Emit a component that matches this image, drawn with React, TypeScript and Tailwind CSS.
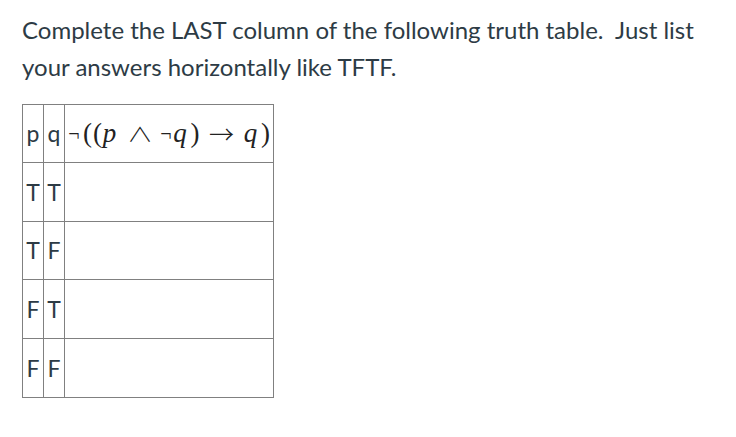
import { Fragment } from "react";

const rows = [
  ["T", "T"],
  ["T", "F"],
  ["F", "T"],
  ["F", "F"],
];

const cell = "border-l border-t border-[#808080] flex items-center justify-center";
const serif = { fontFamily: '"Liberation Serif", "DejaVu Serif", serif' };
const thin = { fontFamily: '"Noto Sans CJK JP", "DejaVu Serif", sans-serif', fontWeight: 300 };

function Formula() {
  // each glyph sits in a fixed box so the spacing follows the typeset math
  return (
    <span className="flex items-center whitespace-nowrap leading-none text-[#222]" style={serif}>
      <span className="inline-block w-[16px] text-center text-[20px]">¬</span>
      <span className="inline-block w-[11px] text-center text-[27px]">(</span>
      <span className="inline-block w-[6px] text-center text-[27px]">(</span>
      <span className="inline-block w-[21px] text-center text-[27px] italic">p</span>
      <span className="inline-block w-[39px] text-center text-[20px]" style={thin}>
        <span className="inline-block scale-x-[1.3]">∧</span>
      </span>
      <span className="inline-block w-[14px] text-center text-[20px]">¬</span>
      <span className="inline-block w-[14px] text-center text-[27px] italic">q</span>
      <span className="inline-block w-[16px] text-center text-[27px]">)</span>
      <span className="inline-block w-[37px] text-center text-[25px]" style={thin}>→</span>
      <span className="inline-block w-[21px] text-center text-[27px] italic">q</span>
      <span className="inline-block w-[7px] text-center text-[27px]">)</span>
    </span>
  );
}

export default function App() {
  return (
    <div className="min-h-screen bg-white pl-[22px] pt-[11px] text-[#2d3b45]" style={{ fontFamily: 'Lato, "Liberation Sans", sans-serif' }}>
      <p className="w-[700px] text-[24px] leading-[37px]">
        Complete the LAST column of the following truth table.&nbsp; Just list your answers horizontally like TFTF.
      </p>

      <div className="mt-[19px] grid w-[252px] grid-cols-[21px_21px_209px] grid-rows-[58px_59px_58px_59px_59px] border-b border-r border-[#808080] text-[23px]">
        <div className={cell}>p</div>
        <div className={cell}>q</div>
        <div className="flex items-center border-l border-t border-[#808080] pl-[1px]">
          <Formula />
        </div>
        {rows.map(([p, q], i) => (
          <Fragment key={i}>
            <div className={cell}>{p}</div>
            <div className={cell}>{q}</div>
            <div className={cell}></div>
          </Fragment>
        ))}
      </div>
    </div>
  );
}
